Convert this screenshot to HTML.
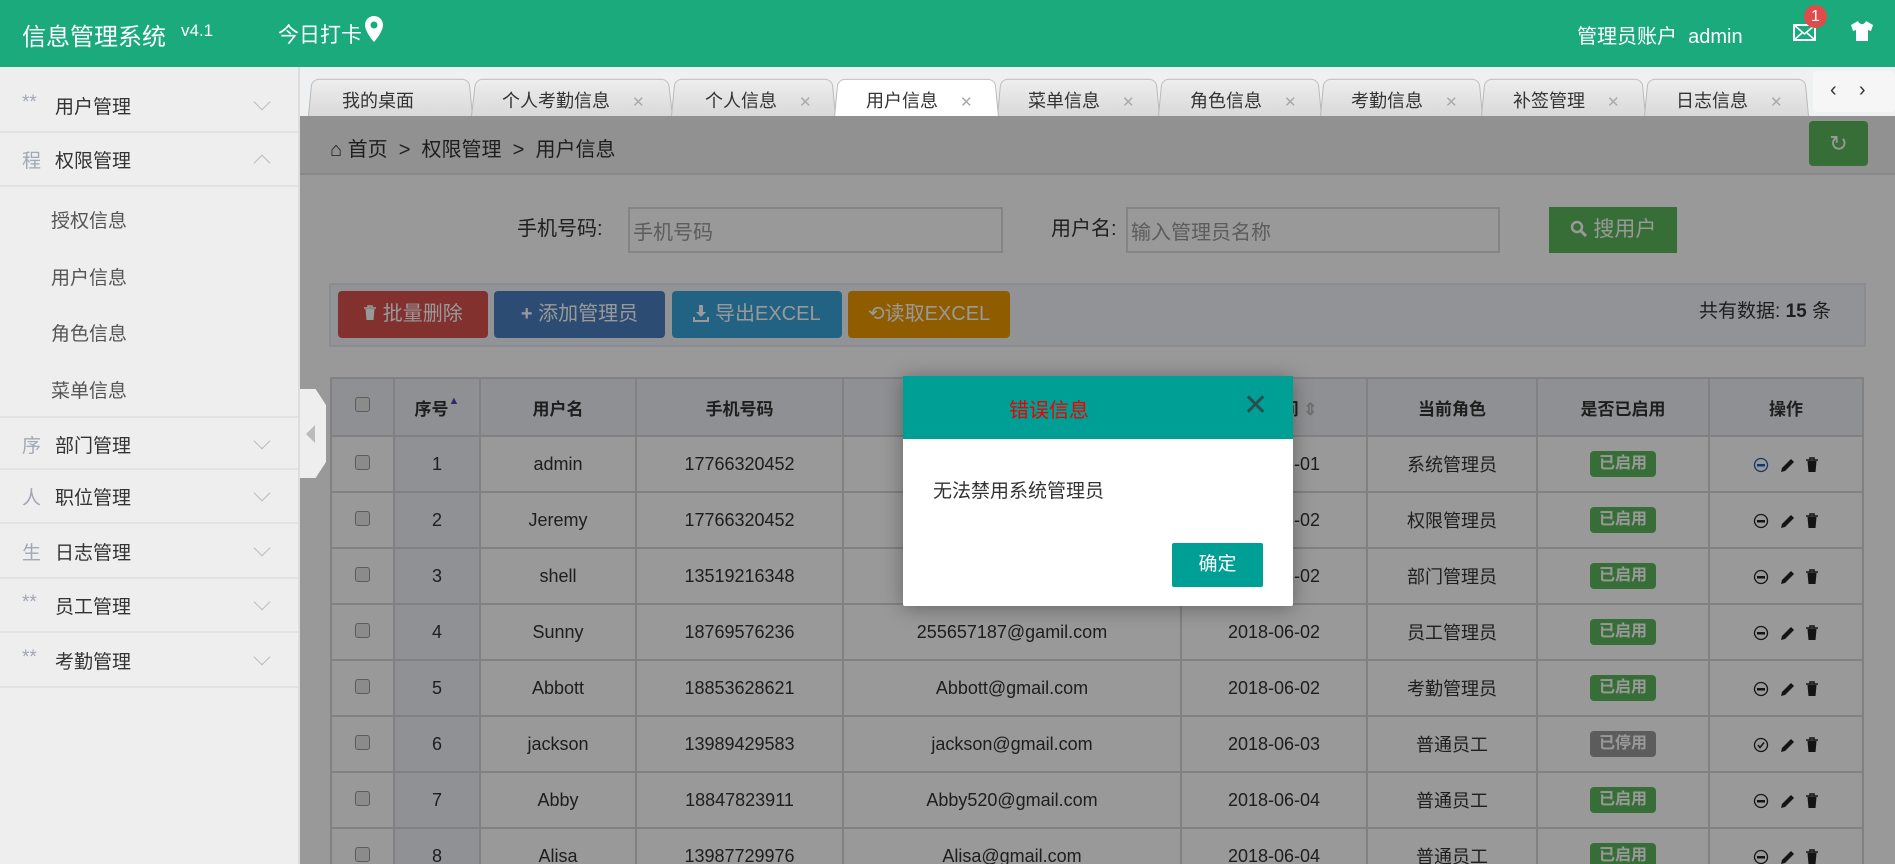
<!DOCTYPE html>
<html><head><meta charset="utf-8">
<style>
*{box-sizing:border-box;margin:0;padding:0}
html,body{width:1895px;height:864px;overflow:hidden}
body{font-family:"Liberation Sans","Noto Sans CJK SC",sans-serif;background:#fff;color:#333}
#root{position:relative;width:1895px;height:864px;overflow:hidden}
.hdr{position:absolute;left:0;top:0;width:1895px;height:67px;background:#1baa7b;color:#fff}
.hdr span{position:absolute;white-space:nowrap}
.side{position:absolute;left:0;top:67px;width:300px;height:797px;background:#eee;border-right:2px solid #ddd}
.mi{position:absolute;left:0;width:298px;height:54px;border-bottom:2px solid #e2e2e2;font-size:19px;color:#333}
.mi .ic{position:absolute;left:22px;top:13px;color:#a0a8b4;font-size:19px}
.mi .tx{position:absolute;left:55px;top:13px}
.mi .ar{position:absolute;left:256px;top:17px;width:12px;height:12px;border-right:1.5px solid #bbb;border-bottom:1.5px solid #bbb;transform:rotate(45deg)}
.mi .ar.up{transform:rotate(-135deg);top:24px}
.sub{position:absolute;left:51px;font-size:19px;color:#555}
.tabbar{position:absolute;left:300px;top:67px;width:1595px;height:49px;background:#eff0f2}
.tab{position:absolute;top:10px;height:39px;background:linear-gradient(#eee,#d9d9d9);border:1px solid #b8b8b8;border-bottom:none;border-radius:8px 8px 0 0;transform:perspective(60px) rotateX(4deg);transform-origin:bottom}
.tabl{position:absolute;top:20px;font-size:18px;color:#333;white-space:nowrap}
.tabl i{font-style:normal;color:#aaa;margin-left:22px;font-size:15px}
.main{position:absolute;left:300px;top:116px;width:1595px;height:748px;background:#fff}
.ov{position:absolute;left:300px;top:116px;width:1595px;height:748px;background:rgba(0,0,0,.4)}
.abs{position:absolute;white-space:nowrap}
.btn{position:absolute;top:291px;height:47px;border-radius:4px;color:#fff;font-size:20px;line-height:47px;text-align:center}
table{position:absolute;left:330px;top:377px;border-collapse:collapse;font-size:18px;color:#333}
td{border:2px solid #d8d8d8;text-align:center;height:56px;padding:0}
tr.h td{height:58px;font-weight:bold;background:#eef1f6;font-size:17px}
td.n{background:#eef2f7}
.cb{display:inline-block;width:15px;height:15px;border:1px solid #999;border-radius:3px;background:#e8e8e8}
.bd{display:inline-block;width:66px;height:26px;line-height:26px;border-radius:4px;background:#5cb85c;color:#fff;font-weight:bold;font-size:16px}
.bd.g{background:#999}
.ops svg{vertical-align:middle;margin:0 5px}
</style></head><body><div id="root">
<svg width="0" height="0" style="position:absolute"><defs>
<g id="mi"><circle cx="8" cy="8" r="6.5" fill="none" stroke="#222" stroke-width="1.3"/><rect x="4" y="7" width="8" height="2.5" fill="#222"/></g>
<g id="ok"><circle cx="8" cy="8" r="6.5" fill="none" stroke="#222" stroke-width="1.3"/><path d="M5 8l2 2.5 4-5" fill="none" stroke="#222" stroke-width="1.5"/></g>
<g id="pn"><path d="M2 15l1-4 9-9 3 3-9 9z" fill="#222"/></g>
<g id="tr"><path d="M1 3h12M5 3V1h4v2" fill="none" stroke="#222" stroke-width="1.5"/><path d="M2.5 4h9l-1 11h-7z" fill="#222"/></g>
</defs></svg>
<div class="hdr">
<span style="left:22px;top:17px;font-size:24px">信息管理系统</span>
<span style="left:181px;top:21px;font-size:17px">v4.1</span>
<span style="left:278px;top:19px;font-size:21px">今日打卡</span>
<svg style="position:absolute;left:364px;top:15px" width="20" height="28" viewBox="0 0 20 28"><path d="M10 1C5 1 1 5 1 10c0 7 9 17 9 17s9-10 9-17c0-5-4-9-9-9z" fill="#fff"/><circle cx="10" cy="10" r="3.5" fill="#1baa7b"/></svg>
<span style="left:1577px;top:20px;font-size:20px">管理员账户&nbsp;&nbsp;admin</span>
<svg style="position:absolute;left:1793px;top:24px" width="23" height="17" viewBox="0 0 23 17"><rect x="1" y="1" width="21" height="15" fill="none" stroke="#fff" stroke-width="2"/><path d="M1 1l10.5 9L22 1M1 16l8-7M22 16l-8-7" fill="none" stroke="#fff" stroke-width="1.6"/></svg>
<div style="position:absolute;left:1804px;top:5px;width:23px;height:23px;border-radius:50%;background:#e04b4b;color:#fff;font-size:16px;text-align:center;line-height:23px">1</div>
<svg style="position:absolute;left:1850px;top:20px" width="24" height="22" viewBox="0 0 24 22"><path d="M8 1L1 5l2 6 3-1v11h12V10l3 1 2-6-7-4c-1 2-2 3-4 3S9 3 8 1z" fill="#fff"/></svg>
</div>

<div class="side">
<div class="mi" style="top:12px"><span class="ic">**</span><span class="tx">用户管理</span><span class="ar"></span></div>
<div class="mi" style="top:66px"><span class="ic">程</span><span class="tx">权限管理</span><span class="ar up"></span></div>
<span class="sub" style="top:139px">授权信息</span>
<span class="sub" style="top:196px">用户信息</span>
<span class="sub" style="top:252px">角色信息</span>
<span class="sub" style="top:309px">菜单信息</span>
<div class="mi" style="top:349px;border-top:2px solid #e2e2e2"><span class="ic">序</span><span class="tx">部门管理</span><span class="ar"></span></div>
<div class="mi" style="top:403px"><span class="ic">人</span><span class="tx">职位管理</span><span class="ar"></span></div>
<div class="mi" style="top:458px"><span class="ic">生</span><span class="tx">日志管理</span><span class="ar"></span></div>
<div class="mi" style="top:512px"><span class="ic">**</span><span class="tx">员工管理</span><span class="ar"></span></div>
<div class="mi" style="top:567px"><span class="ic">**</span><span class="tx">考勤管理</span><span class="ar"></span></div>
</div>

<div class="tabbar">
<div class="tab" style="left:8px;width:165px"></div>
<div class="tab" style="left:171px;width:202px"></div>
<div class="tab" style="left:371px;width:165px"></div>
<div class="tab" style="left:697px;width:163px"></div>
<div class="tab" style="left:858px;width:164px"></div>
<div class="tab" style="left:1020px;width:163px"></div>
<div class="tab" style="left:1181px;width:165px"></div>
<div class="tab" style="left:1344px;width:165px"></div>
<div class="tab" style="left:534px;width:165px;background:#fff;height:40px"></div>
<span class="tabl" style="left:42px">我的桌面</span>
<span class="tabl" style="left:202px">个人考勤信息<i>✕</i></span>
<span class="tabl" style="left:405px">个人信息<i>✕</i></span>
<span class="tabl" style="left:566px">用户信息<i>✕</i></span>
<span class="tabl" style="left:728px">菜单信息<i>✕</i></span>
<span class="tabl" style="left:890px">角色信息<i>✕</i></span>
<span class="tabl" style="left:1051px">考勤信息<i>✕</i></span>
<span class="tabl" style="left:1213px">补签管理<i>✕</i></span>
<span class="tabl" style="left:1376px">日志信息<i>✕</i></span>
<div style="position:absolute;left:1513px;top:4px;width:82px;height:41px;background:#f6f6f6;border-radius:4px"></div>
<span class="tabl" style="left:1530px;top:12px;font-size:20px">‹&nbsp;&nbsp;&nbsp;&nbsp;›</span>
</div>

<div class="main">
<div style="position:absolute;left:0;top:0;width:1595px;height:59px;background:#f2f2f2;border-bottom:2px solid #e5e5e5"></div>
<span class="abs" style="left:30px;top:17px;font-size:20px">⌂ 首页 &nbsp;&gt;&nbsp; 权限管理 &nbsp;&gt;&nbsp; 用户信息</span>
<div style="position:absolute;left:1509px;top:5px;width:59px;height:45px;background:#5cb85c;border-radius:4px;color:#fff;text-align:center;line-height:45px;font-size:22px">↻</div>
<span class="abs" style="left:217px;top:96px;font-size:20px">手机号码:</span>
<div style="position:absolute;left:328px;top:91px;width:375px;height:46px;border:2px solid #ddd;color:#999;font-size:20px;padding:7px 3px">手机号码</div>
<span class="abs" style="left:751px;top:96px;font-size:20px">用户名:</span>
<div style="position:absolute;left:826px;top:91px;width:374px;height:46px;border:2px solid #ddd;color:#999;font-size:20px;padding:7px 3px">输入管理员名称</div>
<div style="position:absolute;left:1249px;top:91px;width:128px;height:46px;background:#5cb85c;color:#fff;font-size:21px;line-height:46px;text-align:center"><svg width="18" height="18" viewBox="0 0 18 18" style="vertical-align:-2px"><circle cx="7" cy="7" r="5" fill="none" stroke="#fff" stroke-width="2.5"/><path d="M11 11l5 5" stroke="#fff" stroke-width="3"/></svg> 搜用户</div>
<div style="position:absolute;left:29px;top:167px;width:1537px;height:64px;background:#f2f6fa;border:2px solid #e6e9ee"></div>
<span class="abs" style="left:1399px;top:180px;font-size:19px">共有数据: <b>15</b> 条</span>
</div>
<div class="btn" style="left:338px;width:150px;background:#d9534f"><svg width="14" height="16" viewBox="0 0 14 16" style="vertical-align:-1px"><path d="M1 3h12M5 3V1h4v2" fill="none" stroke="#fff" stroke-width="1.5"/><path d="M2.5 4h9l-1 11h-7z" fill="#fff"/></svg> 批量删除</div>
<div class="btn" style="left:494px;width:171px;background:#4a7fc1"><b>+</b> 添加管理员</div>
<div class="btn" style="left:672px;width:170px;background:#3aa5dc"><svg width="16" height="18" viewBox="0 0 16 18" style="vertical-align:-2px"><path d="M6 1h4v7h3l-5 5-5-5h3z" fill="#fff"/><path d="M1 13v4h14v-4" fill="none" stroke="#fff" stroke-width="2"/></svg> 导出EXCEL</div>
<div class="btn" style="left:848px;width:162px;background:#f09a00">⟲读取EXCEL</div>

<table>
<colgroup><col style="width:63px"><col style="width:86px"><col style="width:156px"><col style="width:207px"><col style="width:338px"><col style="width:186px"><col style="width:170px"><col style="width:172px"><col style="width:154px"></colgroup>
<tr class="h"><td><span class="cb"></span></td><td>序号<span style="color:#4b4bb0;font-size:11px;vertical-align:top">▲</span></td><td>用户名</td><td>手机号码</td><td>邮箱</td><td>加入时间 <span style="color:#bbb">⇕</span></td><td>当前角色</td><td>是否已启用</td><td>操作</td></tr>
<tr><td><span class="cb"></span></td><td class="n">1</td><td>admin</td><td>17766320452</td><td>admin@gmail.com</td><td>2018-06-01</td><td>系统管理员</td><td><span class="bd">已启用</span></td><td class="ops"><svg width="16" height="16"><circle cx="8" cy="8" r="6.5" fill="none" stroke="#1d5fb0" stroke-width="1.3"/><rect x="4" y="7" width="8" height="2.5" fill="#1d5fb0"/></svg><svg width="16" height="16"><use href="#pn"/></svg><svg width="14" height="16"><use href="#tr"/></svg></td></tr>
<tr><td><span class="cb"></span></td><td class="n">2</td><td>Jeremy</td><td>17766320452</td><td>Jeremy@gmail.com</td><td>2018-06-02</td><td>权限管理员</td><td><span class="bd">已启用</span></td><td class="ops"><svg width="16" height="16"><use href="#mi"/></svg><svg width="16" height="16"><use href="#pn"/></svg><svg width="14" height="16"><use href="#tr"/></svg></td></tr>
<tr><td><span class="cb"></span></td><td class="n">3</td><td>shell</td><td>13519216348</td><td>shell@gmail.com</td><td>2018-06-02</td><td>部门管理员</td><td><span class="bd">已启用</span></td><td class="ops"><svg width="16" height="16"><use href="#mi"/></svg><svg width="16" height="16"><use href="#pn"/></svg><svg width="14" height="16"><use href="#tr"/></svg></td></tr>
<tr><td><span class="cb"></span></td><td class="n">4</td><td>Sunny</td><td>18769576236</td><td>255657187@gamil.com</td><td>2018-06-02</td><td>员工管理员</td><td><span class="bd">已启用</span></td><td class="ops"><svg width="16" height="16"><use href="#mi"/></svg><svg width="16" height="16"><use href="#pn"/></svg><svg width="14" height="16"><use href="#tr"/></svg></td></tr>
<tr><td><span class="cb"></span></td><td class="n">5</td><td>Abbott</td><td>18853628621</td><td>Abbott@gmail.com</td><td>2018-06-02</td><td>考勤管理员</td><td><span class="bd">已启用</span></td><td class="ops"><svg width="16" height="16"><use href="#mi"/></svg><svg width="16" height="16"><use href="#pn"/></svg><svg width="14" height="16"><use href="#tr"/></svg></td></tr>
<tr><td><span class="cb"></span></td><td class="n">6</td><td>jackson</td><td>13989429583</td><td>jackson@gmail.com</td><td>2018-06-03</td><td>普通员工</td><td><span class="bd g">已停用</span></td><td class="ops"><svg width="16" height="16"><use href="#ok"/></svg><svg width="16" height="16"><use href="#pn"/></svg><svg width="14" height="16"><use href="#tr"/></svg></td></tr>
<tr><td><span class="cb"></span></td><td class="n">7</td><td>Abby</td><td>18847823911</td><td>Abby520@gmail.com</td><td>2018-06-04</td><td>普通员工</td><td><span class="bd">已启用</span></td><td class="ops"><svg width="16" height="16"><use href="#mi"/></svg><svg width="16" height="16"><use href="#pn"/></svg><svg width="14" height="16"><use href="#tr"/></svg></td></tr>
<tr><td><span class="cb"></span></td><td class="n">8</td><td>Alisa</td><td>13987729976</td><td>Alisa@gmail.com</td><td>2018-06-04</td><td>普通员工</td><td><span class="bd">已启用</span></td><td class="ops"><svg width="16" height="16"><use href="#mi"/></svg><svg width="16" height="16"><use href="#pn"/></svg><svg width="14" height="16"><use href="#tr"/></svg></td></tr>
</table>

<div class="ov"></div>
<div style="position:absolute;left:300px;top:389px;width:26px;height:89px;background:#eee;clip-path:polygon(0 0,60% 0,100% 18%,100% 82%,60% 100%,0 100%)"></div>
<div style="position:absolute;left:306px;top:425px;width:0;height:0;border-top:9px solid transparent;border-bottom:9px solid transparent;border-right:9px solid #bbb"></div>

<div style="position:absolute;left:903px;top:376px;width:390px;height:230px;background:#fff;box-shadow:0 2px 20px rgba(0,0,0,.35);border-radius:2px">
<div style="height:63px;background:#009f95;position:relative">
<span class="abs" style="left:106px;top:18px;color:#e00;font-size:20px">错误信息</span>
<span class="abs" style="left:340px;top:12px;color:#2a4f4d;font-size:30px;font-weight:300">✕</span>
</div>
<span class="abs" style="left:30px;top:100px;font-size:19px;color:#333">无法禁用系统管理员</span>
<div style="position:absolute;left:269px;top:167px;width:91px;height:44px;background:#009f95;color:#fff;font-size:19px;line-height:44px;text-align:center;border-radius:2px">确定</div>
</div>
</div></body></html>
